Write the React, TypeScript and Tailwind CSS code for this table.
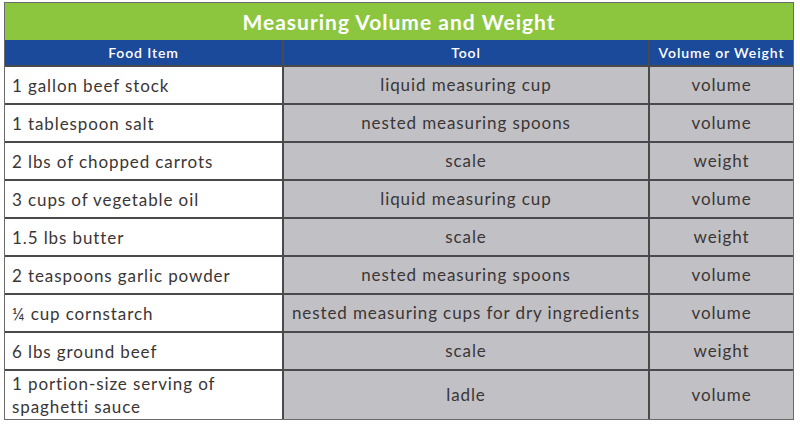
const rows: [string, string, string][] = [
  ["1 gallon beef stock", "liquid measuring cup", "volume"],
  ["1 tablespoon salt", "nested measuring spoons", "volume"],
  ["2 lbs of chopped carrots", "scale", "weight"],
  ["3 cups of vegetable oil", "liquid measuring cup", "volume"],
  ["1.5 lbs butter", "scale", "weight"],
  ["2 teaspoons garlic powder", "nested measuring spoons", "volume"],
  ["¼ cup cornstarch", "nested measuring cups for dry ingredients", "volume"],
  ["6 lbs ground beef", "scale", "weight"],
  ["1 portion-size serving of\nspaghetti sauce", "ladle", "volume"],
];

export default function App() {
  return (
    <div className="h-[427px] w-[800px] bg-white pl-[4px] pt-[2px] font-['Lato',sans-serif]">
      <div className="w-[790px] border border-[#6b6b6b] bg-[#4a4a4a]">
        <div className="flex h-[37px] items-center justify-center bg-[#8cc63f] text-[21px] font-bold tracking-[1px] text-white">
          Measuring Volume and Weight
        </div>
        <div className="grid grid-cols-[277px_364px_1fr] gap-x-[2px] gap-y-[2px]">
          {["Food Item", "Tool", "Volume or Weight"].map((h) => (
            <div
              key={h}
              className="flex h-[25px] items-center justify-center bg-[#1c4a9a] text-[14px] font-semibold tracking-[0.9px] text-white"
            >
              {h}
            </div>
          ))}
          {rows.map(([item, tool, kind], i) => {
            const tall = i === rows.length - 1;
            const h = tall ? "h-[48px]" : "h-[36px]";
            return [
              <div
                key={i + "a"}
                className={`${h} flex items-center whitespace-pre-line bg-white pl-[7px] text-[17px] leading-[23px] tracking-[0.9px] text-[#3a3636]`}
              >
                {item}
              </div>,
              <div
                key={i + "b"}
                className={`${h} flex items-center justify-center bg-[#c1c0c5] text-[17px] tracking-[0.9px] text-[#3a3636]`}
              >
                {tool}
              </div>,
              <div
                key={i + "c"}
                className={`${h} flex items-center justify-center bg-[#c1c0c5] text-[17px] tracking-[0.9px] text-[#3a3636]`}
              >
                {kind}
              </div>,
            ];
          })}
        </div>
      </div>
    </div>
  );
}
